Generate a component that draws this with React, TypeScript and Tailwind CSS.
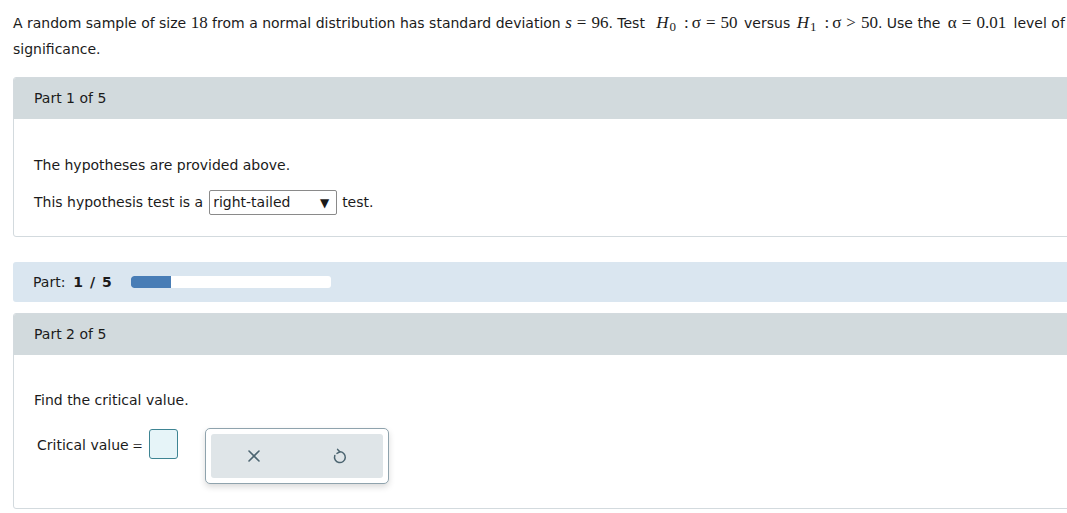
import React from 'react';

const M: React.FC<{ children: React.ReactNode; i?: boolean; className?: string }> = ({ children, i, className }) => (
  <span className={`font-['Liberation_Serif',serif] text-[17px] ${i ? 'italic' : ''} ${className ?? ''}`}>{children}</span>
);

const Op: React.FC<{ children: React.ReactNode }> = ({ children }) => (
  <span className="font-['Liberation_Serif',serif] text-[17px] mx-[5px]">{children}</span>
);

const Sub: React.FC<{ children: React.ReactNode }> = ({ children }) => (
  <sub className="font-['Liberation_Serif',serif] text-[13px] ml-[1px]">{children}</sub>
);

const PartHeader: React.FC<{ label: string }> = ({ label }) => (
  <div className="h-[41px] bg-[#d2dadd] pl-[20px] flex items-center text-[14px]">{label}</div>
);

export default function App() {
  return (
    <div className="w-[1067px] h-[513px] overflow-hidden bg-white text-[#1b1b1b] font-['DejaVu_Sans',Verdana,sans-serif] text-[14px]">
      <div className="pl-[13px] pt-[10px] leading-[26px] whitespace-nowrap">
        <div>
          A random sample of size <M>18</M> from a normal distribution has standard deviation <M i>s</M>
          <Op>=</Op>
          <M>96</M>. Test <M i className="ml-[7px]">H</M>
          <Sub>0</Sub>
          <M className="ml-[8px]">:</M>
          <M className="ml-[3px]">σ</M>
          <Op>=</Op>
          <M>50</M> <span className="mx-[2px]">versus</span> <M i>H</M>
          <Sub>1</Sub>
          <M className="ml-[8px]">:</M>
          <M className="ml-[3px]">σ</M>
          <Op>&gt;</Op>
          <M>50</M>. Use the <M className="ml-[3px]">α</M>
          <Op>=</Op>
          <M>0.01</M> <span className="ml-[3px]">level of</span>
        </div>
        <div>significance.</div>
      </div>

      <div className="ml-[13px] mt-[15px] w-[1080px] flex flex-col">
        {/* part 1 */}
        <div className="rounded-[3px] border border-[#d3dade] overflow-hidden">
          <PartHeader label="Part 1 of 5" />
          <div className="pl-[20px] pt-[36px] pb-[21px]">
            <div>The hypotheses are provided above.</div>
            <div className="mt-[14px] flex items-center">
              <span>This hypothesis test is a</span>
              <span className="ml-[6px] h-[25px] w-[128px] border border-[#8a8a8a] rounded-[2px] flex items-center justify-between pl-[3px] pr-[7px]">
                <span>right-tailed</span>
                <span className="text-[12px]">▼</span>
              </span>
              <span className="ml-[5px]">test.</span>
            </div>
          </div>
        </div>

        {/* progress */}
        <div className="mt-[25px] h-[40px] bg-[#dae6f0] rounded-[3px] flex items-center pl-[20px]">
          <span>Part:</span>
          <span className="ml-[8px] font-bold tracking-[1px]">1 / 5</span>
          <div className="ml-[18px] w-[200px] h-[12px] bg-white rounded-[3px] overflow-hidden">
            <div className="h-full bg-[#487db6] rounded-l-[3px]" style={{ width: '20%' }} />
          </div>
        </div>

        {/* part 2 */}
        <div className="mt-[11px] rounded-[3px] border border-[#d3dade] overflow-hidden">
          <PartHeader label="Part 2 of 5" />
          <div className="pl-[20px] pt-[35px] pb-[24px]">
            <div>Find the critical value.</div>
            <div className="mt-[17px] flex items-start">
              <div className="flex items-start pt-[1px] pl-[3px]">
                <span className="mt-[6px]">Critical value</span>
                <span className="ml-[4px] mt-[5px] font-['Liberation_Serif',serif] text-[17px]">=</span>
                <span className="ml-[7px] w-[29px] h-[30px] bg-[#e6f4f8] border border-[#3e8493] rounded-[3px]" />
              </div>
              <div className="ml-[27px] w-[184px] h-[56px] border border-[#8fa3ad] rounded-[5px] p-[5px] shadow-[0_3px_6px_rgba(0,0,0,0.15)] bg-white">
                <div className="h-full bg-[#dfe5e8] rounded-[3px] flex items-center">
                  <div className="flex-1 flex justify-center">
                    <svg width="14" height="14" viewBox="0 0 14 14" fill="none" stroke="#4b6470" strokeWidth="1.6" strokeLinecap="round">
                      <path d="M2 2 L12 12 M12 2 L2 12" />
                    </svg>
                  </div>
                  <div className="flex-1 flex justify-center">
                    <svg width="14" height="16" viewBox="0 0 14 16" fill="none" stroke="#4b6470" strokeWidth="1.5" strokeLinecap="round" strokeLinejoin="round">
                      <path d="M6.6 3.8 A5.4 5.4 0 1 1 1.8 7.4" />
                      <path d="M4.6 1.4 L6.8 3.8 L4 5.4" />
                    </svg>
                  </div>
                </div>
              </div>
            </div>
          </div>
        </div>
      </div>
    </div>
  );
}
